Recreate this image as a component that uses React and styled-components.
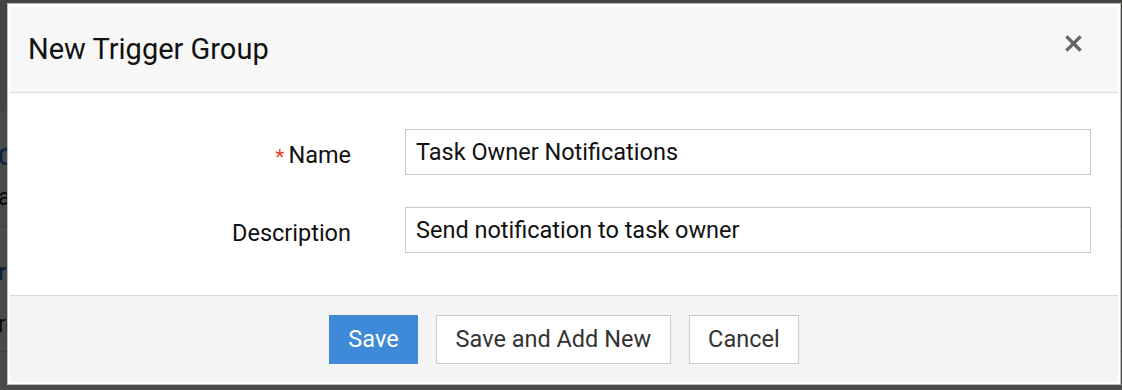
import React from 'react';
import styled, { createGlobalStyle } from 'styled-components';

const GlobalStyle = createGlobalStyle`
	html, body {
		margin: 0;
		padding: 0;
		background: #4a4a4a;
	}
	* { box-sizing: border-box; }
	body {
		font-family: Roboto, "Liberation Sans", Arial, sans-serif;
	}
`;

const Screen = styled.div`
	position: relative;
	width: 1122px;
	height: 390px;
	overflow: hidden;
	background: #fff;
`;

// the page behind the dialog, only a sliver of it shows on the left
const Page = styled.div`
	display: flex;
	flex-direction: column;
	height: 100%;
`;

const PageHeader = styled.div`
	height: 111px;
	flex: none;
	background: #eeeadc;
	border-bottom: 1px solid #d8d8d8;
`;

const PageSection = styled.div`
	display: flex;
	flex-direction: column;
	flex: none;
	gap: ${(p) => p.$gap}px;
	height: ${(p) => p.$height}px;
	padding-top: ${(p) => p.$top}px;
	border-bottom: 1px solid #d8d8d8;
`;

const PageText = styled.div`
	margin-left: -2px;
	font-size: 23px;
	line-height: 26px;
	white-space: nowrap;
	color: ${(p) => (p.$link ? '#2a78cc' : '#222')};
	font-weight: ${(p) => (p.$link ? 500 : 400)};
`;

const Overlay = styled.div`
	position: absolute;
	inset: 0;
	background: rgba(0, 0, 0, 0.71);
`;

const Modal = styled.div`
	position: absolute;
	left: 7px;
	top: 3px;
	width: 1114px;
	height: 382px;
	display: flex;
	flex-direction: column;
	background: #fff;
	border: 1px solid #bdbdbd;
	padding: 2px;
`;

const Header = styled.div`
	height: 87px;
	flex: none;
	display: flex;
	align-items: center;
	justify-content: space-between;
	padding: 0 36px 0 18px;
	background: #f7f7f7;
	border-bottom: 1px solid #dedede;
`;

const Title = styled.h2`
	margin: 0;
	font-size: 29px;
	font-weight: 400;
	color: #111;
`;

const CloseButton = styled.button`
	align-self: flex-start;
	margin-top: 29px;
	display: flex;
	align-items: center;
	justify-content: center;
	width: 17px;
	height: 17px;
	padding: 0;
	border: 0;
	background: transparent;
	cursor: pointer;
`;

const Body = styled.div`
	flex: 1;
	display: grid;
	grid-template-columns: 341px 686px;
	column-gap: 54px;
	row-gap: 32px;
	align-content: start;
	padding-top: 36px;
`;

const Label = styled.label`
	display: flex;
	align-items: center;
	justify-content: flex-end;
	padding-top: 5px;
	font-size: 23.5px;
	color: #111;
`;

const Required = styled.span`
	font-size: 21px;
	line-height: 1;
	color: #e8412c;
	margin-right: 4px;
	transform: translateY(3px);
`;

const Input = styled.input`
	height: 46px;
	width: 100%;
	padding: 0 10px;
	border: 1px solid #cacaca;
	border-radius: 0;
	font-family: inherit;
	font-size: 23.5px;
	color: #111;
	outline: none;
	background: #fff;
`;

const Footer = styled.div`
	height: 87px;
	flex: none;
	display: flex;
	align-items: center;
	justify-content: center;
	gap: 18px;
	background: #f4f4f4;
	border-top: 1px solid #d9d9d9;
`;

const Button = styled.button`
	height: 49px;
	padding: 0 18.5px;
	font-family: inherit;
	font-size: 23.5px;
	font-weight: 400;
	cursor: pointer;
	border-radius: 0;
	border: 1px solid ${(p) => (p.$primary ? '#3e8ad8' : '#cccccc')};
	background: ${(p) => (p.$primary ? '#3e8ad8' : '#ffffff')};
	color: ${(p) => (p.$primary ? '#ffffff' : '#333333')};
`;

export default function App() {
	return (
		<Screen>
			<GlobalStyle />
			<Page>
				<PageHeader />
				<PageSection $height={116} $top={34} $gap={14}>
					<PageText $link>Contacts</PageText>
					<PageText>all records</PageText>
				</PageSection>
				<PageSection $height={125} $top={33} $gap={26}>
					<PageText $link>rules</PageText>
					<PageText>rename</PageText>
				</PageSection>
			</Page>
			<Overlay />
			<Modal role="dialog">
				<Header>
					<Title>New Trigger Group</Title>
					<CloseButton aria-label="Close">
						<svg width="17" height="17" viewBox="0 0 17 17">
							<path d="M2.5 2.5 L14.5 14.5 M14.5 2.5 L2.5 14.5" stroke="#62666b" strokeWidth="3.2" strokeLinecap="square" />
						</svg>
					</CloseButton>
				</Header>
				<Body>
					<Label htmlFor="tg-name">
						<Required>*</Required>Name
					</Label>
					<Input id="tg-name" defaultValue="Task Owner Notifications" />
					<Label htmlFor="tg-desc">Description</Label>
					<Input id="tg-desc" defaultValue="Send notification to task owner" />
				</Body>
				<Footer>
					<Button $primary>Save</Button>
					<Button>Save and Add New</Button>
					<Button>Cancel</Button>
				</Footer>
			</Modal>
		</Screen>
	);
}
